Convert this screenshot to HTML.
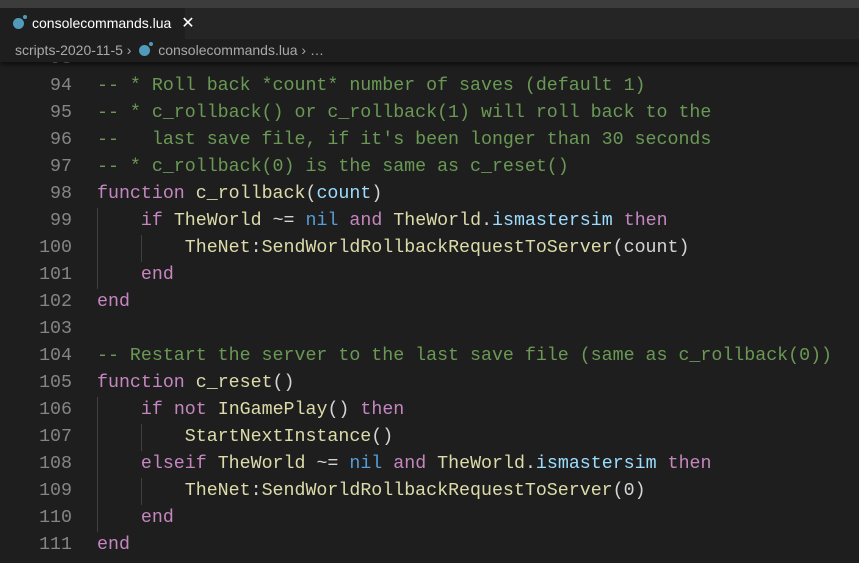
<!DOCTYPE html>
<html><head><style>
body{margin:0;width:859px;height:563px;background:#1e1e1e;overflow:hidden;font-family:"Liberation Sans",sans-serif}
.top{position:absolute;left:0;top:0;width:859px;height:8px;background:#3c3c3c}
.tabs{position:absolute;left:0;top:8px;width:859px;height:31px;background:#252526;z-index:3}
.tab{position:absolute;left:0;top:0;width:185px;height:31px;background:#1e1e1e;color:#fff;font-size:14px;line-height:31px;white-space:nowrap}
.bc{position:absolute;left:0;top:39px;width:859px;height:23px;background:#1e1e1e;color:#a9a9a9;font-size:14px;line-height:22px;box-shadow:0 3px 4px rgba(0,0,0,.5);z-index:2;white-space:nowrap}
.ico{display:inline-block;width:11px;height:11px;border-radius:50%;background:#519aba;position:relative;vertical-align:-1px}
.ico:after{content:"";position:absolute;right:-3px;top:-3px;width:4px;height:4px;border-radius:50%;background:#519aba}
.code{position:absolute;left:0;top:46px;font-family:"Liberation Mono",monospace;font-size:18.3px;color:#d4d4d4}
.l{height:27px;line-height:27px;white-space:pre;position:relative}
.n{display:inline-block;width:72px;text-align:right;color:#858585;margin-right:25px}
.c{color:#6a9955}.k{color:#c586c0}.f{color:#dcdcaa}.v{color:#9cdcfe}.b{color:#569cd6}.y{color:#dcdcaa}
.g{position:absolute;width:1px;background:#404040}
</style></head><body>
<div class="top"></div>
<div class="tabs"><div class="tab"><span style="margin-left:13px" class="ico"></span><span style="margin-left:8px">consolecommands.lua</span><span style="margin-left:10px;font-size:16px">✕</span></div></div>
<div class="bc"><span style="margin-left:15px">scripts-2020-11-5 ›</span> <span class="ico" style="margin-left:4px"></span> <span style="margin-left:4px">consolecommands.lua › …</span></div>
<div class="code">
<div class="l"><span class="n">93</span></div>
<div class="l"><span class="n">94</span><span class="c">-- * Roll back *count* number of saves (default 1)</span></div>
<div class="l"><span class="n">95</span><span class="c">-- * c_rollback() or c_rollback(1) will roll back to the</span></div>
<div class="l"><span class="n">96</span><span class="c">--   last save file, if it's been longer than 30 seconds</span></div>
<div class="l"><span class="n">97</span><span class="c">-- * c_rollback(0) is the same as c_reset()</span></div>
<div class="l"><span class="n">98</span><span class="k">function</span> <span class="f">c_rollback</span>(<span class="v">count</span>)</div>
<div class="l"><span class="n">99</span>    <span class="k">if</span> <span class="y">TheWorld</span> ~= <span class="b">nil</span> <span class="k">and</span> <span class="y">TheWorld</span>.<span class="v">ismastersim</span> <span class="k">then</span></div>
<div class="l"><span class="n">100</span>        <span class="y">TheNet</span>:<span class="f">SendWorldRollbackRequestToServer</span>(count)</div>
<div class="l"><span class="n">101</span>    <span class="k">end</span></div>
<div class="l"><span class="n">102</span><span class="k">end</span></div>
<div class="l"><span class="n">103</span></div>
<div class="l"><span class="n">104</span><span class="c">-- Restart the server to the last save file (same as c_rollback(0))</span></div>
<div class="l"><span class="n">105</span><span class="k">function</span> <span class="f">c_reset</span>()</div>
<div class="l"><span class="n">106</span>    <span class="k">if</span> <span class="k">not</span> <span class="f">InGamePlay</span>() <span class="k">then</span></div>
<div class="l"><span class="n">107</span>        <span class="f">StartNextInstance</span>()</div>
<div class="l"><span class="n">108</span>    <span class="k">elseif</span> <span class="y">TheWorld</span> ~= <span class="b">nil</span> <span class="k">and</span> <span class="y">TheWorld</span>.<span class="v">ismastersim</span> <span class="k">then</span></div>
<div class="l"><span class="n">109</span>        <span class="y">TheNet</span>:<span class="f">SendWorldRollbackRequestToServer</span>(0)</div>
<div class="l"><span class="n">110</span>    <span class="k">end</span></div>
<div class="l"><span class="n">111</span><span class="k">end</span></div>
</div>
<div class="g" style="left:97px;top:208px;height:81px"></div>
<div class="g" style="left:141px;top:235px;height:27px"></div>
<div class="g" style="left:97px;top:397px;height:135px"></div>
<div class="g" style="left:141px;top:424px;height:27px"></div>
<div class="g" style="left:141px;top:478px;height:27px"></div>
</body></html>
